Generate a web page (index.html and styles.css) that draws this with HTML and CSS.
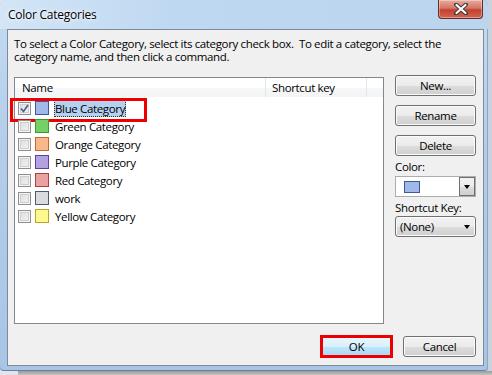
FILE: index.html
```html
<!DOCTYPE html>
<html lang="en">
<head>
    <meta charset="UTF-8">
    <title>Color Categories</title>
    <link rel="stylesheet" href="styles.css">
</head>
<body>
    <div class="window">
        <div class="titlebar">
            <span class="title">Color Categories</span>
            <div class="close-btn">
                <svg width="16" height="12" viewBox="0 0 16 12">
                    <path d="M3 1.5 L13 10.5 M13 1.5 L3 10.5" stroke="#3a3a3a" stroke-width="4" stroke-linecap="round"/>
                    <path d="M3.5 2 L12.5 10 M12.5 2 L3.5 10" stroke="#ffffff" stroke-width="2.2" stroke-linecap="round"/>
                </svg>
            </div>
        </div>

        <div class="client">
            <div class="intro">
                <div class="intro-line">To select a Color Category, select its category check box.&nbsp; To edit a category, select the</div>
                <div class="intro-line">category name, and then click a command.</div>
            </div>

            <div class="main">
                <div class="list">
                    <div class="list-head">
                        <div class="col col-name">Name</div>
                        <div class="col col-key">Shortcut key</div>
                        <div class="col col-rest"></div>
                    </div>
                    <div class="rows">
                        <div class="row">
                            <span class="check checked">
                                <svg width="9" height="9" viewBox="0 0 9 9"><path d="M1 4.5 L3.5 7.5 L8 1" fill="none" stroke="#4a5f8c" stroke-width="1.6"/></svg>
                            </span>
                            <span class="swatch blue"></span>
                            <span class="label selected">Blue Category</span>
                            <span class="mark mark-row"></span>
                        </div>
                        <div class="row">
                            <span class="check"></span>
                            <span class="swatch green"></span>
                            <span class="label">Green Category</span>
                        </div>
                        <div class="row">
                            <span class="check"></span>
                            <span class="swatch orange"></span>
                            <span class="label">Orange Category</span>
                        </div>
                        <div class="row">
                            <span class="check"></span>
                            <span class="swatch purple"></span>
                            <span class="label">Purple Category</span>
                        </div>
                        <div class="row">
                            <span class="check"></span>
                            <span class="swatch red"></span>
                            <span class="label">Red Category</span>
                        </div>
                        <div class="row">
                            <span class="check"></span>
                            <span class="swatch work"></span>
                            <span class="label">work</span>
                        </div>
                        <div class="row">
                            <span class="check"></span>
                            <span class="swatch yellow"></span>
                            <span class="label">Yellow Category</span>
                        </div>
                    </div>
                </div>

                <div class="side">
                    <button class="btn">New...</button>
                    <button class="btn">Rename</button>
                    <button class="btn">Delete</button>
                    <div class="field-label">Color:</div>
                    <div class="combo color-combo">
                        <span class="swatch blue"></span>
                        <span class="drop-btn"><span class="arrow"></span></span>
                    </div>
                    <div class="field-label">Shortcut Key:</div>
                    <div class="combo key-combo">
                        <span>(None)</span>
                        <span class="arrow"></span>
                    </div>
                </div>
            </div>

            <div class="footer">
                <button class="btn btn-default">OK<span class="mark mark-ok"></span></button>
                <button class="btn">Cancel</button>
            </div>
        </div>
    </div>
    <div class="shadow"></div>
</body>
</html>
```

FILE: styles.css
```css
body {
    margin: 0;
    padding: 0;
    width: 492px;
    height: 375px;
    overflow: hidden;
    background: linear-gradient(to right, #dfe6ee 0%, #c9d3de 100%);
    font-family: "Open Sans", Arial, sans-serif;
    font-size: 11.5px;
    letter-spacing: -0.35px;
    color: #000000;
}
.window {
    width: 488px;
    height: 371px;
    box-sizing: border-box;
    border-radius: 6px 6px 4px 4px;
    background: linear-gradient(to bottom, #c4dbf2 0%, #b3cde9 40%, #a9c5e6 100%);
    box-shadow: inset -1px 0 0 #8ea6c2, inset 0 -1px 0 #6d7f96;
}
.titlebar {
    height: 29px;
    display: flex;
    align-items: flex-start;
    justify-content: space-between;
    background: linear-gradient(to right, #d3e5f7 0%, #bfd8f1 35%, #bcd5ef 100%);
    border-radius: 6px 6px 0 0;
}
.title {
    padding: 7px 0 0 8px;
    line-height: 16px;
    font-size: 12px;
    letter-spacing: -0.25px;
    text-shadow: 0 0 6px #ffffff, 0 0 3px #ffffff;
}
.close-btn {
    width: 45px;
    height: 19px;
    margin-right: 5px;
    box-sizing: border-box;
    border: 1px solid #6b2b25;
    border-top: none;
    border-radius: 0 0 4px 4px;
    background: linear-gradient(to bottom, #e9aa9e 0%, #d57766 45%, #c2402f 55%, #d2664f 100%);
    box-shadow: inset 0 0 0 1px rgba(255, 255, 255, 0.35);
    display: flex;
    align-items: center;
    justify-content: center;
}
.client {
    margin: 0 4px 0 7px;
    height: 337px;
    box-sizing: border-box;
    border: 1px solid #7d8a99;
    background-color: #f0f0f0;
    padding: 7px 7px 0 6px;
}
.intro {
    white-space: nowrap;
}
.intro-line {
    height: 13px;
    line-height: 13px;
}
.main {
    display: flex;
    align-items: flex-start;
    gap: 11px;
    margin-top: 12px;
}
.list {
    width: 370px;
    height: 247px;
    margin-top: 2px;
    box-sizing: border-box;
    border: 1px solid #828790;
    background-color: #ffffff;
}
.list-head {
    display: flex;
    height: 19px;
    background: linear-gradient(to bottom, #ffffff 0%, #ffffff 50%, #f6f7f8 51%, #f3f4f6 100%);
}
.col {
    line-height: 19px;
    box-sizing: border-box;
    border-right: 1px solid #e3e5e7;
}
.col-name {
    width: 251px;
    padding-left: 7px;
}
.col-key {
    width: 101px;
    padding-left: 6px;
}
.col-rest {
    flex: 1;
    border-right: none;
}
.rows {
    padding-top: 2px;
}
.row {
    position: relative;
    display: flex;
    align-items: center;
    height: 18px;
    padding-left: 3px;
}
.check {
    width: 13px;
    height: 13px;
    box-sizing: border-box;
    border: 1px solid #8f8f8f;
    background: linear-gradient(135deg, #dcdcdc 0%, #f4f4f4 100%);
    box-shadow: inset 0 0 0 1px #f4f4f4, inset 0 0 0 2px #cfcfcf;
    display: flex;
    align-items: center;
    justify-content: center;
}
.check svg {
    display: block;
}
.swatch {
    width: 14px;
    height: 14px;
    margin-left: 4px;
    box-sizing: border-box;
    border: 1px solid;
}
.blue { background-color: #a0b9e8; border-color: #3c5a96; }
.green { background-color: #75d065; border-color: #3a9a32; }
.orange { background-color: #f7b98b; border-color: #c8682c; }
.purple { background-color: #b4a1e0; border-color: #5d4498; }
.red { background-color: #e9a1a1; border-color: #b13f3f; }
.work { background-color: #dadbde; border-color: #4d5a70; }
.yellow { background-color: #fcf98d; border-color: #b8a52a; }
.label {
    margin-left: 5px;
    padding: 0 1px;
    line-height: 17px;
}
.label.selected {
    background-color: #b5d1f0;
    outline: 1px dotted #333333;
    outline-offset: -1px;
}
.mark {
    position: absolute;
    box-sizing: border-box;
    border: 3px solid #ee0000;
    pointer-events: none;
}
.mark-row {
    left: -5px;
    top: -1px;
    width: 137px;
    height: 24px;
}
.side {
    width: 81px;
    display: flex;
    flex-direction: column;
}
.btn {
    position: relative;
    height: 21px;
    width: 81px;
    padding: 0;
    box-sizing: border-box;
    border: 1px solid #707070;
    border-radius: 3px;
    background: linear-gradient(to bottom, #f2f2f2 0%, #ebebeb 50%, #dddddd 51%, #cfcfcf 100%);
    box-shadow: inset 0 0 0 1px #fbfbfb;
    font-family: "Open Sans", Arial, sans-serif;
    font-size: 11.5px;
    letter-spacing: -0.35px;
    color: #000000;
    margin-bottom: 9px;
}
.side .btn:nth-of-type(3) {
    margin-bottom: 0;
}
.field-label {
    margin-top: 4px;
    line-height: 14px;
}
.combo {
    height: 21px;
    box-sizing: border-box;
    display: flex;
    align-items: center;
}
.color-combo {
    margin-top: 2px;
    border: 1px solid #abadb3;
    background-color: #ffffff;
    justify-content: space-between;
}
.color-combo .swatch {
    width: 16px;
    height: 12px;
    margin-left: 8px;
}
.drop-btn {
    width: 16px;
    height: 19px;
    box-sizing: border-box;
    border: 1px solid #707070;
    background: linear-gradient(to bottom, #f2f2f2 0%, #ebebeb 50%, #dddddd 51%, #cfcfcf 100%);
    display: flex;
    align-items: center;
    justify-content: center;
}
.arrow {
    width: 0;
    height: 0;
    border-left: 3.5px solid transparent;
    border-right: 3.5px solid transparent;
    border-top: 4px solid #000000;
}
.key-combo {
    margin-top: 1px;
    padding: 0 5px 0 4px;
    border: 1px solid #707070;
    border-radius: 3px;
    background: linear-gradient(to bottom, #f2f2f2 0%, #ebebeb 50%, #dddddd 51%, #cfcfcf 100%);
    box-shadow: inset 0 0 0 1px #fbfbfb;
    justify-content: space-between;
}
.footer {
    display: flex;
    justify-content: flex-end;
    gap: 10px;
    margin-top: 12px;
}
.footer .btn {
    width: 73px;
    margin-bottom: 0;
}
.btn-default {
    border-color: #3c7fb1;
    background: linear-gradient(to bottom, #eaf6fd 0%, #d9f0fc 50%, #bee6fd 51%, #a7d9f5 100%);
    box-shadow: inset 0 0 0 1px #9ce0fa;
}
.mark-ok {
    left: -1px;
    top: -2px;
    width: 73px;
    height: 23px;
}
.shadow {
    height: 4px;
    margin-left: 18px;
    background: linear-gradient(to bottom, #9a9a9a 0%, #c4c4c4 100%);
}
```
